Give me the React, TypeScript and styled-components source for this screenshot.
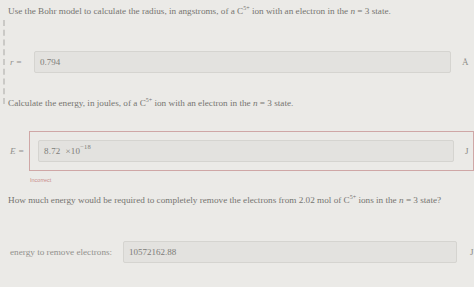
import styled, { createGlobalStyle } from "styled-components";

const Global = createGlobalStyle`
  html, body {
    margin: 0;
    padding: 0;
    background: #ebeae7;
  }
  body {
    font-family: "Liberation Serif", "Times New Roman", serif;
    color: #6d6c69;
    width: 474px;
    height: 287px;
    overflow: hidden;
  }
`;

const Page = styled.div`
  position: relative;
  width: 474px;
  height: 287px;
  padding: 6px 0 0 8px;
  box-sizing: border-box;
  display: flex;
  flex-direction: column;
`;

const EdgeMarks = styled.div`
  position: absolute;
  left: 0;
  top: 20px;
  width: 3px;
  height: 84px;
  border-right: 2px dashed #c3c2be;
  opacity: 0.8;
`;

const Question = styled.p<{ $top?: number }>`
  margin: ${(p) => p.$top ?? 0}px 0 0 0;
  font-size: 9.2px;
  line-height: 11px;
  white-space: nowrap;
  color: #767571;
  sup {
    font-size: 6px;
    vertical-align: 4px;
    line-height: 0;
  }
  i {
    font-style: italic;
  }
`;

const AnswerRow = styled.div<{ $top: number; $labelWidth: number }>`
  display: flex;
  align-items: center;
  margin-top: ${(p) => p.$top}px;
  padding-left: 2px;
  & > :first-child {
    width: ${(p) => p.$labelWidth}px;
    flex: none;
  }
`;

const Label = styled.span<{ $italic?: boolean }>`
  font-size: 9.2px;
  color: #92918d;
  white-space: nowrap;
  font-style: ${(p) => (p.$italic ? "italic" : "normal")};
`;

const Field = styled.div<{ $width: number }>`
  width: ${(p) => p.$width}px;
  flex: none;
  height: 22px;
  box-sizing: border-box;
  background: #e3e2df;
  border: 1px solid #d5d4d0;
  border-radius: 2px;
  padding: 0 5px;
  display: flex;
  align-items: center;
  font-size: 9px;
  color: #7d7c78;
`;

const Unit = styled.span<{ $gap: number }>`
  margin-left: ${(p) => p.$gap}px;
  font-size: 9px;
  color: #8a8985;
`;

const WrongBox = styled.div`
  width: 445px;
  height: 40px;
  flex: none;
  box-sizing: border-box;
  border: 1.5px solid #cfa7a6;
  padding: 0 0 0 8px;
  display: flex;
  align-items: center;
  gap: 11px;
`;

const Sci = styled.span`
  letter-spacing: 0.2px;
  sup {
    font-size: 6.5px;
    vertical-align: 5px;
    line-height: 0;
  }
`;

const Incorrect = styled.div`
  margin: 6px 0 0 22px;
  font-size: 5.5px;
  color: #c98d8b;
  font-family: "Liberation Sans", Arial, sans-serif;
`;

export default function App() {
  return (
    <>
      <Global />
      <Page>
        <EdgeMarks />
        <Question>
          Use the Bohr model to calculate the radius, in angstroms, of a C<sup>5+</sup> ion with an
          electron in the <i>n</i> = 3 state.
        </Question>

        <AnswerRow $top={34} $labelWidth={24}>
          <Label $italic>r =</Label>
          <Field $width={417}>0.794</Field>
          <Unit $gap={11}>Å</Unit>
        </AnswerRow>

        <Question $top={25}>
          Calculate the energy, in joules, of a C<sup>5+</sup> ion with an electron in the <i>n</i> = 3
          state.
        </Question>

        <AnswerRow $top={22} $labelWidth={19}>
          <Label $italic>E =</Label>
          <WrongBox>
            <Field $width={416}>
              <Sci>
                8.72 &nbsp;×10<sup>−18</sup>
              </Sci>
            </Field>
            <Unit $gap={0}>J</Unit>
          </WrongBox>
        </AnswerRow>
        <Incorrect>Incorrect</Incorrect>

        <Question $top={12}>
          How much energy would be required to completely remove the electrons from 2.02 mol of C
          <sup>5+</sup> ions in the <i>n</i> = 3 state?
        </Question>

        <AnswerRow $top={35} $labelWidth={113}>
          <Label>energy to remove electrons:</Label>
          <Field $width={334}>10572162.88</Field>
          <Unit $gap={13}>J</Unit>
        </AnswerRow>
      </Page>
    </>
  );
}
